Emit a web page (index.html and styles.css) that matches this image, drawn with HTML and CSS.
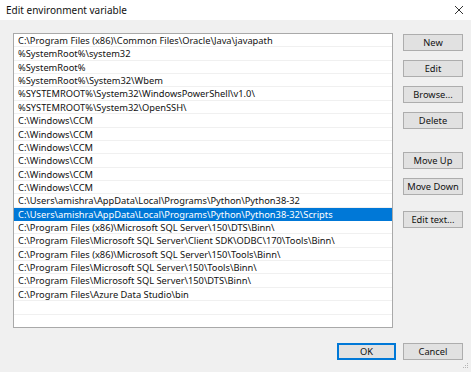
FILE: index.html
```html
<!DOCTYPE html>
<html lang="en">

<head>
    <meta charset="UTF-8">
    <title>Edit environment variable</title>
    <link rel="stylesheet" href="styles.css">
</head>

<body>
    <div class="window">
        <div class="titlebar">
            <span class="title">Edit environment variable</span>
            <svg class="close" width="10" height="10" viewBox="0 0 10 10">
                <path d="M1 1 L9 9 M9 1 L1 9" stroke="#333" stroke-width="1" fill="none" />
            </svg>
        </div>
        <div class="main">
            <ul class="list">
                <li>C:\Program Files (x86)\Common Files\Oracle\Java\javapath</li>
                <li>%SystemRoot%\system32</li>
                <li>%SystemRoot%</li>
                <li>%SystemRoot%\System32\Wbem</li>
                <li>%SYSTEMROOT%\System32\WindowsPowerShell\v1.0\</li>
                <li>%SYSTEMROOT%\System32\OpenSSH\</li>
                <li>C:\Windows\CCM</li>
                <li>C:\Windows\CCM</li>
                <li>C:\Windows\CCM</li>
                <li>C:\Windows\CCM</li>
                <li>C:\Windows\CCM</li>
                <li>C:\Windows\CCM</li>
                <li>C:\Users\amishra\AppData\Local\Programs\Python\Python38-32</li>
                <li class="selected">C:\Users\amishra\AppData\Local\Programs\Python\Python38-32\Scripts</li>
                <li>C:\Program Files (x86)\Microsoft SQL Server\150\DTS\Binn\</li>
                <li>C:\Program Files\Microsoft SQL Server\Client SDK\ODBC\170\Tools\Binn\</li>
                <li>C:\Program Files (x86)\Microsoft SQL Server\150\Tools\Binn\</li>
                <li>C:\Program Files\Microsoft SQL Server\150\Tools\Binn\</li>
                <li>C:\Program Files\Microsoft SQL Server\150\DTS\Binn\</li>
                <li>C:\Program Files\Azure Data Studio\bin</li>
                <li></li>
                <li></li>
            </ul>
            <div class="actions">
                <button type="button">New</button>
                <button type="button">Edit</button>
                <button type="button">Browse...</button>
                <button type="button">Delete</button>
                <button type="button" class="spaced">Move Up</button>
                <button type="button">Move Down</button>
                <button type="button" class="spaced-sm">Edit text...</button>
            </div>
        </div>
        <div class="footer">
            <button type="button" class="default">OK</button>
            <button type="button">Cancel</button>
            <svg class="grip" width="6" height="6" viewBox="0 0 6 6">
                <rect x="4" y="0" width="1" height="1" fill="#b5b5b5" />
                <rect x="2" y="2" width="1" height="1" fill="#b5b5b5" />
                <rect x="4" y="2" width="1" height="1" fill="#b5b5b5" />
                <rect x="0" y="4" width="1" height="1" fill="#b5b5b5" />
                <rect x="2" y="4" width="1" height="1" fill="#b5b5b5" />
                <rect x="4" y="4" width="1" height="1" fill="#b5b5b5" />
            </svg>
        </div>
    </div>
</body>

</html>
```

FILE: styles.css
```css
* {
    box-sizing: border-box;
}

body {
    margin: 0;
    padding: 0;
    background: #fff;
    font-family: "Noto Sans", "Open Sans", sans-serif;
    font-size: 9.3px;
    color: #111;
}

.window {
    width: 471px;
    height: 372px;
    background: #f0f0f0;
    position: relative;
}

.titlebar {
    height: 20px;
    background: #fff;
    display: flex;
    align-items: center;
    justify-content: space-between;
    padding: 0 7px 1px 6px;
}

.title {
    font-size: 10px;
}

.main {
    display: flex;
    padding: 13px 0 0 13px;
    gap: 10px;
}

.list {
    list-style: none;
    margin: 0;
    padding: 0;
    width: 380px;
    height: 295px;
    border: 1px solid #a9a9a9;
    background: #fff;
    overflow: hidden;
}

.list li {
    height: 13.36px;
    line-height: 13px;
    padding-left: 4px;
    border-bottom: 1px solid #f0f0f0;
    white-space: nowrap;
    overflow: hidden;
}

.list li.selected {
    background: #0078d7;
    color: #fff;
    border-bottom-color: #0078d7;
}

.actions {
    display: flex;
    flex-direction: column;
    gap: 9px;
    padding-top: 1px;
}

button {
    width: 60px;
    height: 17px;
    padding: 0;
    font-family: inherit;
    font-size: 9.3px;
    color: #111;
    background: #e1e1e1;
    border: 1px solid #adadad;
    border-radius: 0;
}

.actions .spaced {
    margin-top: 14px;
}

.actions .spaced-sm {
    margin-top: 7px;
}

.footer {
    display: flex;
    justify-content: flex-end;
    gap: 7px;
    padding: 15px 8px 0 0;
}

.footer .default {
    width: 59px;
    border: 2px solid #0078d7;
}

.grip {
    position: absolute;
    right: 2px;
    bottom: 3px;
}
```
